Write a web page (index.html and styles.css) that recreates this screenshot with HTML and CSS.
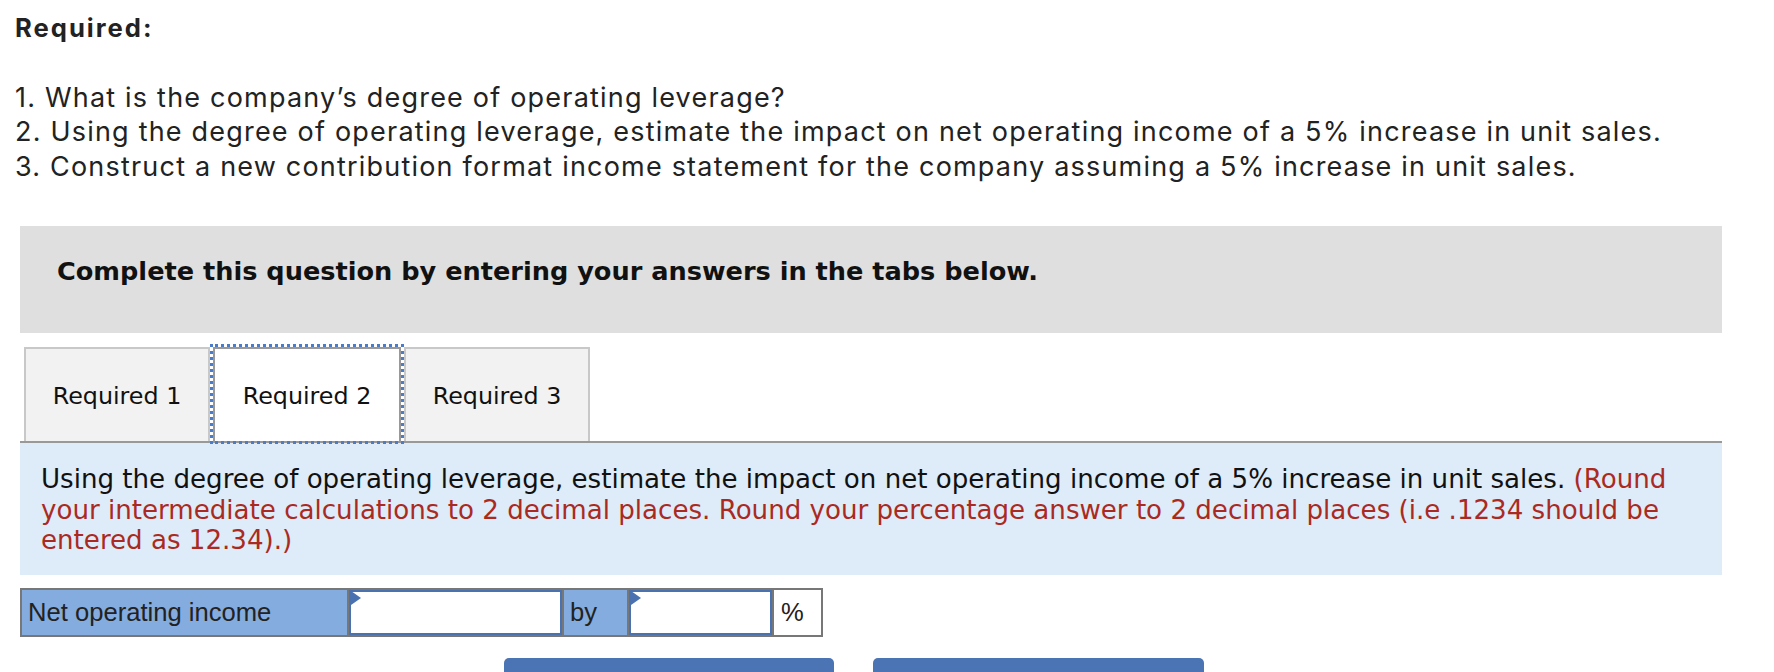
FILE: index.html
```html
<!DOCTYPE html>
<html lang="en">
<head>
<meta charset="utf-8">
<title>Required</title>
<link rel="stylesheet" href="styles.css">
</head>
<body>
<div class="page">
  <h3 class="req-title">Required:</h3>
  <div class="req-list">
    <p>1. What is the company’s degree of operating leverage?</p>
    <p>2. Using the degree of operating leverage, estimate the impact on net operating income of a 5% increase in unit sales.</p>
    <p>3. Construct a new contribution format income statement for the company assuming a 5% increase in unit sales.</p>
  </div>

  <div class="notice">Complete this question by entering your answers in the tabs below.</div>

  <div class="tabs">
    <div class="tab">Required 1</div>
    <div class="tab tab-active">Required 2</div>
    <div class="tab">Required 3</div>
  </div>

  <div class="panel">
    <p class="panel-line">Using the degree of operating leverage, estimate the impact on net operating income of a 5% increase in unit sales. <span class="hint">(Round</span></p>
    <p class="panel-line hint">your intermediate calculations to 2 decimal places. Round your percentage answer to 2 decimal places (i.e .1234 should be</p>
    <p class="panel-line hint">entered as 12.34).)</p>
  </div>

  <div class="answer">
    <div class="cell cell-label">Net operating income</div>
    <div class="cell cell-input cell-input-wide"><span class="marker"></span></div>
    <div class="cell cell-label cell-by">by</div>
    <div class="cell cell-input cell-input-narrow"><span class="marker"></span></div>
    <div class="cell cell-unit">%</div>
  </div>

  <div class="nav">
    <div class="nav-btn nav-prev"></div>
    <div class="nav-btn nav-next"></div>
  </div>
</div>
</body>
</html>
```

FILE: styles.css
```css
html, body {
  margin: 0;
  padding: 0;
  background: #ffffff;
  overflow: hidden;
}

.page {
  padding: 11px 52px 0 20px;
  color: #222;
}

.req-title {
  margin: 0 0 0 -5px;
  font-family: Inter, Lato, sans-serif;
  font-weight: 700;
  font-size: 25.6px;
  line-height: 34.5px;
  letter-spacing: 2px;
  color: #222;
}

.req-list {
  margin: 35px 0 0 -5px;
  font-family: Inter, Lato, sans-serif;
  font-size: 27px;
  line-height: 34.5px;
  letter-spacing: 1.2px;
  color: #222;
}

.req-list p {
  margin: 0;
}

.notice {
  margin-top: 42px;
  height: 107px;
  box-sizing: border-box;
  padding: 30px 37px 0 37px;
  background: #dfdfdf;
  font-family: "DejaVu Sans", Verdana, sans-serif;
  font-weight: 700;
  font-size: 25.6px;
  line-height: 30px;
  color: #111;
}

.tabs {
  margin-top: 14px;
  display: flex;
  padding-left: 4px;
  border-bottom: 2px solid #999;
}

.tab {
  box-sizing: border-box;
  width: 186px;
  height: 94px;
  display: flex;
  align-items: center;
  justify-content: center;
  padding-top: 2px;
  background: #f2f2f2;
  border: 2px solid #c8c8c8;
  border-bottom: none;
  font-family: "DejaVu Sans", Verdana, sans-serif;
  font-size: 23.8px;
  color: #111;
}

.tab-active {
  width: 188px;
  margin: 0 3px;
  background: #ffffff;
  border-color: #999;
  outline: 3px dotted #4a7cc9;
  outline-offset: 0;
}

.panel {
  box-sizing: border-box;
  height: 132px;
  padding: 21px 0 0 21px;
  background: #deebf8;
  font-family: "DejaVu Sans", Verdana, sans-serif;
  font-size: 26.1px;
  line-height: 30.5px;
  color: #111;
}

.panel-line {
  margin: 0;
  white-space: nowrap;
}

.hint {
  color: #aa2a22;
}

.answer {
  margin-top: 13px;
  display: inline-flex;
  gap: 2px;
  padding: 2px;
  background: #777;
  height: 49px;
  box-sizing: border-box;
}

.cell {
  box-sizing: border-box;
  height: 45px;
  display: flex;
  align-items: center;
  font-family: "Liberation Sans", Arial, sans-serif;
  font-size: 25.6px;
  color: #222;
}

.cell-label {
  width: 325px;
  padding-left: 6px;
  background: #84acde;
}

.cell-by {
  width: 63px;
  padding-left: 6px;
}

.cell-input {
  position: relative;
  background: #ffffff;
  border: 2px solid #4a72b0;
}

.cell-input-wide {
  width: 213px;
}

.cell-input-narrow {
  width: 143px;
}

.marker {
  position: absolute;
  left: 0;
  top: -1px;
  width: 0;
  height: 0;
  border-left: 10px solid #4a72b0;
  border-top: 7px solid transparent;
  border-bottom: 7px solid transparent;
}

.cell-unit {
  width: 47px;
  padding-left: 7px;
  background: #ffffff;
}

.nav {
  display: flex;
  gap: 39px;
  margin: 21px 0 0 484px;
}

.nav-btn {
  width: 330px;
  height: 40px;
  background: #4a74b4;
  border-radius: 5px 5px 0 0;
}

.nav-next {
  width: 331px;
}
```
